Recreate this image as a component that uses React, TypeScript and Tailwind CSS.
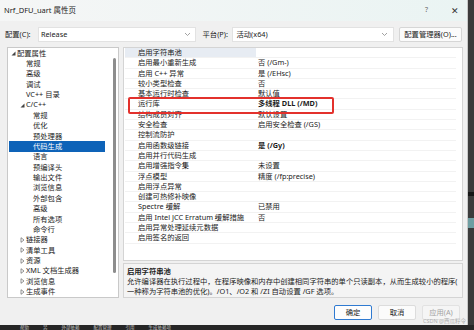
import React from 'react';

const font = "font-['Segoe_UI','Noto_Sans','Noto_Sans_CJK_SC',sans-serif]";

type TreeItem = { label: string; indent: number; arrow?: 'open' | 'closed'; selected?: boolean };

const tree: TreeItem[] = [
  { label: '配置属性', indent: 0, arrow: 'open' },
  { label: '常规', indent: 1 },
  { label: '高级', indent: 1 },
  { label: '调试', indent: 1 },
  { label: 'VC++ 目录', indent: 1 },
  { label: 'C/C++', indent: 1, arrow: 'open' },
  { label: '常规', indent: 2 },
  { label: '优化', indent: 2 },
  { label: '预处理器', indent: 2 },
  { label: '代码生成', indent: 2, selected: true },
  { label: '语言', indent: 2 },
  { label: '预编译头', indent: 2 },
  { label: '输出文件', indent: 2 },
  { label: '浏览信息', indent: 2 },
  { label: '外部包含', indent: 2 },
  { label: '高级', indent: 2 },
  { label: '所有选项', indent: 2 },
  { label: '命令行', indent: 2 },
  { label: '链接器', indent: 1, arrow: 'closed' },
  { label: '清单工具', indent: 1, arrow: 'closed' },
  { label: '资源', indent: 1, arrow: 'closed' },
  { label: 'XML 文档生成器', indent: 1, arrow: 'closed' },
  { label: '浏览信息', indent: 1, arrow: 'closed' },
  { label: '生成事件', indent: 1, arrow: 'closed' },
];

const props: [string, string, boolean?][] = [
  ['启用字符串池', ''],
  ['启用最小重新生成', '否 (/Gm-)'],
  ['启用 C++ 异常', '是 (/EHsc)'],
  ['较小类型检查', '否'],
  ['基本运行时检查', '默认值'],
  ['运行库', '多线程 DLL (/MD)', true],
  ['结构成员对齐', '默认设置'],
  ['安全检查', '启用安全检查 (/GS)'],
  ['控制流防护', ''],
  ['启用函数级链接', '是 (/Gy)', true],
  ['启用并行代码生成', ''],
  ['启用增强指令集', '未设置'],
  ['浮点模型', '精度 (/fp:precise)'],
  ['启用浮点异常', ''],
  ['创建可热修补映像', ''],
  ['Spectre 缓解', '已禁用'],
  ['启用 Intel JCC Erratum 缓解措施', '否'],
  ['启用异常处理延续元数据', ''],
  ['启用签名的返回', ''],
];

const indentPad = ['pl-[1px]', 'pl-[10px]', 'pl-[17px]'];

const Chevron = () => (
  <svg width="7" height="5" viewBox="0 0 7 5" className="shrink-0">
    <polyline points="1,1 3.5,3.5 6,1" fill="none" stroke="#8a8a8a" strokeWidth="0.8" />
  </svg>
);

const Arrow = ({ kind }: { kind: 'open' | 'closed' }) =>
  kind === 'open' ? (
    <svg width="5" height="5" viewBox="0 0 5 5" className="shrink-0">
      <polygon points="4.5,0.5 4.5,4.5 0.5,4.5" fill="#444" />
    </svg>
  ) : (
    <svg width="5" height="6" viewBox="0 0 5 6" className="shrink-0">
      <polygon points="1,0.7 4,3 1,5.3" fill="none" stroke="#666" strokeWidth="0.7" />
    </svg>
  );

export default function App() {
  return (
    <div className={`w-[474px] h-[330px] flex flex-col bg-[#2e2e2e] overflow-hidden relative text-[7.3px] text-[#1b1b1b] ${font}`}>
      <div className="flex h-[325px]">
        {/* Dialog */}
        <div className="w-[468px] flex flex-col bg-[#f0f0f0] border-r border-[#c8c8c8]">
          {/* Title bar */}
          <div className="h-[21px] flex items-center pl-[4px] pr-[8px] bg-gradient-to-r from-[#f5f6f6] to-[#eaf4f3]">
            <span className="text-[7.5px]">Nrf_DFU_uart 属性页</span>
            <span className="ml-auto text-[#666] text-[7px] mr-[23px]">?</span>
            <span className="text-[#333] text-[9px] leading-none">✕</span>
          </div>

          {/* Config row */}
          <div className="h-[16px] mt-[5px] flex items-center pl-[5px] pr-[5px]">
            <span className="w-[33px]">配置(C):</span>
            <div className="w-[158px] h-[15px] bg-white border border-[#e2e2e2] flex items-center pl-[2px] pr-[4px]">
              <span className="flex-1">Release</span>
              <Chevron />
            </div>
            <span className="ml-[7px] w-[30px]">平台(P):</span>
            <div className="w-[162px] h-[15px] bg-white border border-[#e2e2e2] flex items-center pl-[3px] pr-[5px]">
              <span className="flex-1">活动(x64)</span>
              <Chevron />
            </div>
            <div className="ml-[5px] w-[63px] h-[15px] bg-[#fbfbfb] border border-[#d6d6d6] rounded-[2px] flex items-center justify-center">
              配置管理器(O)...
            </div>
          </div>

          {/* Panels */}
          <div className="flex mt-[5px] pl-[7px] pr-[4px] h-[251px]">
            {/* Tree */}
            <div className="w-[112px] h-[251px] bg-white border border-[#c9c9c9] flex relative">
              <div className="flex-1 flex flex-col pl-[1px] pr-[5px]">
                {tree.map((t, i) => (
                  <div
                    key={i}
                    className={`h-[10.4px] flex items-center gap-[1px] leading-none ${indentPad[t.indent]} ${t.selected ? 'bg-[#0e63b8] text-white' : ''}`}
                  >
                    <span className="w-[6px] flex justify-center">{t.arrow && <Arrow kind={t.arrow} />}</span>
                    <span>{t.label}</span>
                  </div>
                ))}
              </div>
              {/* scrollbar */}
              <div className="w-[8px] flex justify-center pt-[10px] pb-[24px]">
                <div className="w-[3px] h-full bg-[#8d8d8d] rounded-full" />
              </div>
            </div>

            {/* Right side */}
            <div className="ml-[4px] flex-1 flex flex-col">
              <div className="h-[215px] bg-white border border-[#d4d4d4] pl-[1px] pr-[6px] relative">
                {props.map(([name, value, bold], i) => (
                  <div key={i} className="h-[10.3px] flex items-center border-b border-[#f2f2f2] leading-none">
                    <div className={`w-[131px] h-full flex items-center pl-[13px] ${i === 0 ? 'bg-[#e7ecf3]' : ''}`}>
                      {name}
                    </div>
                    <div className={`pl-[2px] ${bold ? 'font-bold' : ''}`}>{value}</div>
                  </div>
                ))}
                {/* red highlight */}
                <div className="absolute left-[4px] top-[49px] w-[206px] h-[17px] border-2 border-[#e3312c] rounded-[2px]" />
              </div>
              <div className="mt-[2px] h-[35px] bg-[#f4f4f4] border border-[#d4d4d4] pl-[3px] pt-[2px] flex flex-col leading-[10px]">
                <span className="font-bold">启用字符串池</span>
                <span>允许编译器在执行过程中，在程序映像和内存中创建相同字符串的单个只读副本，从而生成较小的程序(</span>
                <span>一种称为字符串池的优化)。/O1、/O2 和 /ZI 自动设置 /GF 选项。</span>
              </div>
            </div>
          </div>

          {/* Buttons */}
          <div className="flex justify-end gap-[6px] mt-[7px] pr-[7px]">
            <div className="w-[38px] h-[15px] bg-[#fdfdfd] border border-[#2f7ad1] rounded-[2px] flex items-center justify-center">确定</div>
            <div className="w-[38px] h-[15px] bg-[#fbfbfb] border border-[#dcdcdc] rounded-[2px] flex items-center justify-center">取消</div>
            <div className="w-[38px] h-[15px] bg-[#f5f5f5] border border-[#e2e2e2] rounded-[2px] flex items-center justify-center text-[#a3a3a3]">应用(A)</div>
          </div>
        </div>

        {/* right dark strip */}
        <div className="flex-1 bg-[#3b3b3b] flex flex-col">
          <div className="h-[192px]" />
          <div className="h-[4px] bg-[#151515]" />
          <div className="h-[22px]" />
          <div className="h-[10px] bg-[#6f9ea2]" />
        </div>
      </div>

      {/* bottom strip with text behind the dialog */}
      <div className="h-[5px] bg-[#262626] flex items-center gap-[14px] pl-[20px] text-[#c8c8c8] text-[4.5px] leading-[5px]">
        <span>帮助</span>
        <span>另</span>
        <span>外部依赖</span>
        <span>配置管理</span>
        <span>引用</span>
        <span>生成依赖项</span>
      </div>

      {/* watermark */}
      <span className="absolute right-[8px] top-[319px] text-[5.5px] text-[#b0b0b0] leading-none">CSDN @西瓜籽令</span>
    </div>
  );
}
